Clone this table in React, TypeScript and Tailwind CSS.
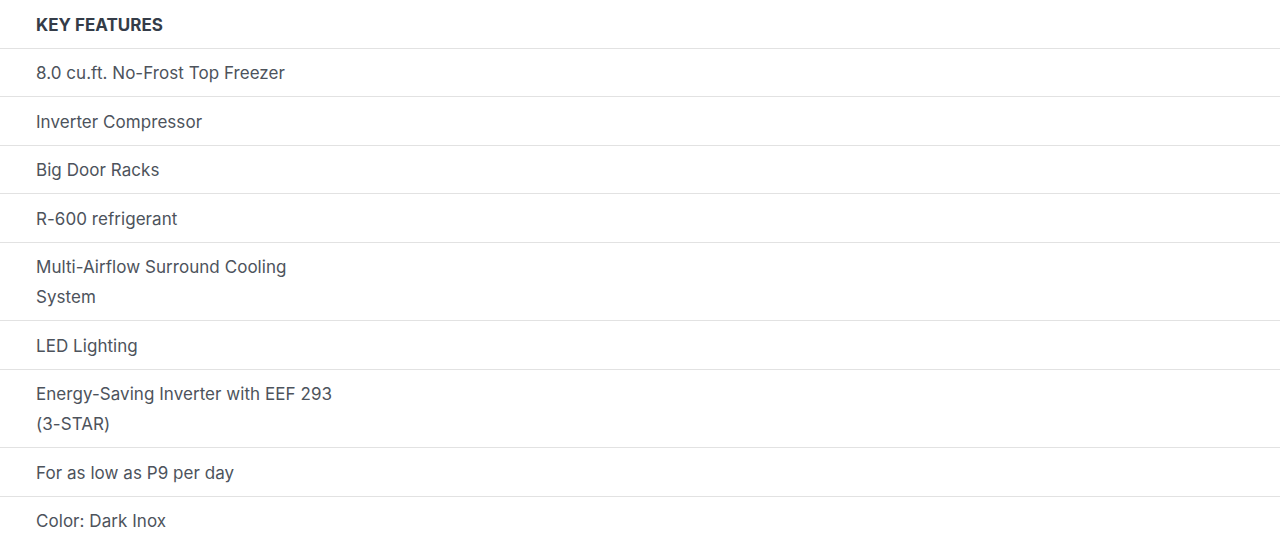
const features = [
  "8.0 cu.ft. No-Frost Top Freezer",
  "Inverter Compressor",
  "Big Door Racks",
  "R-600 refrigerant",
  "Multi-Airflow Surround Cooling System",
  "LED Lighting",
  "Energy-Saving Inverter with EEF 293 (3-STAR)",
  "For as low as P9 per day",
  "Color: Dark Inox",
];

export default function App() {
  return (
    <main className="min-h-screen bg-white font-['Inter',sans-serif]">
      <ul>
        <li className="border-b border-[#e2e2e2] px-9 pt-[9.5px] pb-[8px] text-[17px] font-bold leading-[30px] text-[#343c48]">
          KEY FEATURES
        </li>
        {features.map((f) => (
          <li
            key={f}
            className="border-b border-[#e2e2e2] px-9 pt-[9.5px] pb-[8px] text-[17px] font-normal leading-[30px] tracking-[0.05px] text-[#4d535c] last:border-b-0"
          >
            <span className="block w-[308px]">{f}</span>
          </li>
        ))}
      </ul>
    </main>
  );
}
